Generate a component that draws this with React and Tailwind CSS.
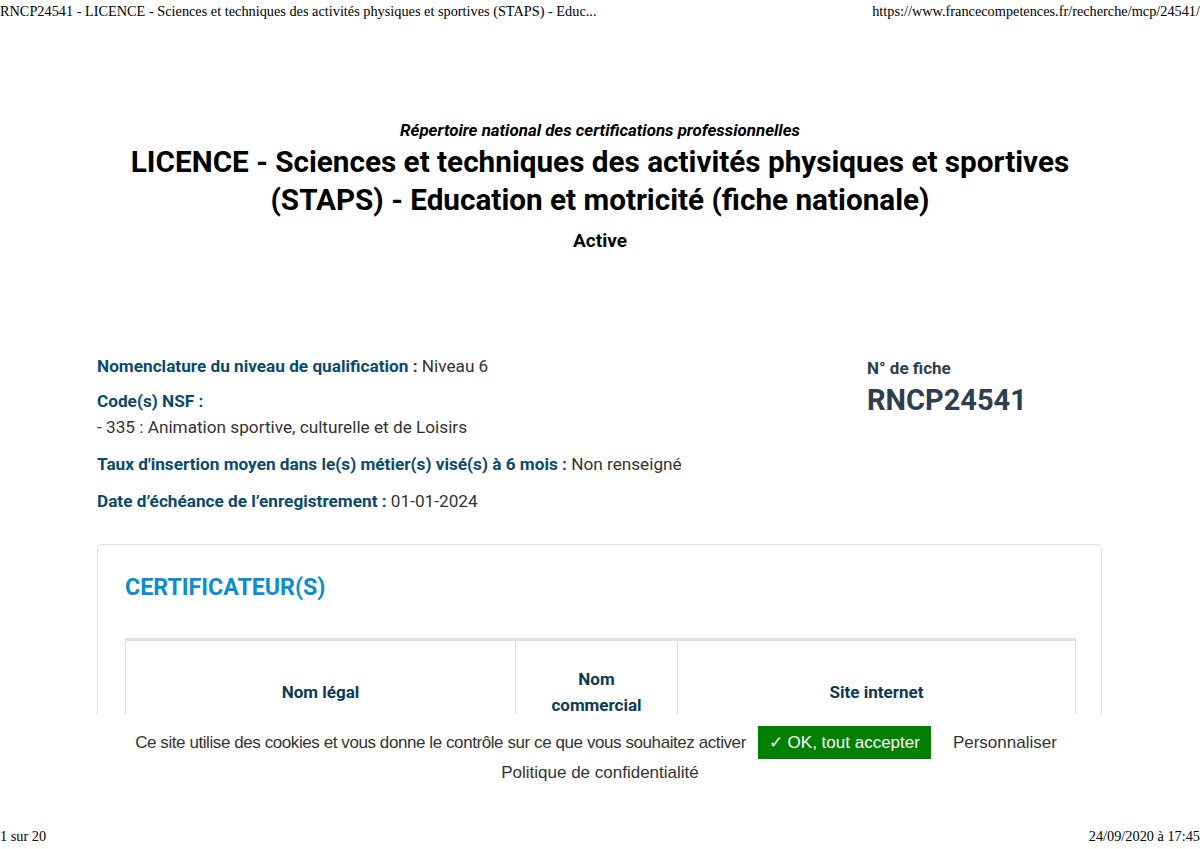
import React from "react";

const App = () => {
  return (
    <div className="h-[849px] w-[1200px] flex flex-col bg-white overflow-hidden">
      {/* Print header */}
      <div className="h-[24px] flex items-start justify-between font-['Liberation_Serif',serif] text-[14.3px] leading-[22px] text-black">
        <span>RNCP24541 - LICENCE - Sciences et techniques des activités physiques et sportives (STAPS) - Educ...</span>
        <span>https://www.francecompetences.fr/recherche/mcp/24541/</span>
      </div>

      {/* Page */}
      <div className="relative flex-1 overflow-hidden font-['Roboto',sans-serif]">
        <div className="pt-[95px] text-center text-black">
          <p className="text-[16.9px] leading-[22px] italic font-bold">
            Répertoire national des certifications professionnelles
          </p>
          <h1 className="mt-[2px] text-[29.7px] leading-[38px] font-bold">
            LICENCE - Sciences et techniques des activités physiques et sportives
            <br />
            (STAPS) - Education et motricité (fiche nationale)
          </h1>
          <p className="mt-[10px] text-[19px] leading-[24px] font-bold">Active</p>
        </div>

        {/* Infos */}
        <div className="mt-[102px] ml-[97px] mr-[99px] flex justify-between">
          <div className="flex flex-col text-[17.2px] leading-[22px] text-[#333]">
            <p>
              <span className="font-bold text-[#0b4a6f]">Nomenclature du niveau de qualification : </span>
              Niveau 6
            </p>
            <p className="mt-[13px] font-bold text-[#0b4a6f]">Code(s) NSF :</p>
            <p className="mt-[4px]">- 335 : Animation sportive, culturelle et de Loisirs</p>
            <p className="mt-[15px]">
              <span className="font-bold text-[#0b4a6f]">Taux d'insertion moyen dans le(s) métier(s) visé(s) à 6 mois : </span>
              Non renseigné
            </p>
            <p className="mt-[15px]">
              <span className="font-bold text-[#0b4a6f]">Date d’échéance de l’enregistrement : </span>
              01-01-2024
            </p>
          </div>
          <div className="w-[234px] pt-[2px] text-[#2c3e50]">
            <p className="text-[17px] leading-[22px] font-bold">N° de fiche</p>
            <p className="text-[29px] leading-[34px] font-bold mt-[4px]">RNCP24541</p>
          </div>
        </div>

        {/* Certificateurs card */}
        <div className="mt-[32px] ml-[97px] w-[1005px] rounded-[5px] border border-[#e3e3e3] px-[27px] pt-[27px] pb-[40px]">
          <h2 className="text-[23.2px] leading-[30px] font-bold text-[#0a8dd1]">CERTIFICATEUR(S)</h2>
          <table className="mt-[36px] w-[951px] border-collapse text-[17px] leading-[26px] font-bold text-[#0b3a56]">
            <thead>
              <tr className="border-t-[3px] border-[#e0e0e0]">
                <th className="w-[390px] h-[104px] border border-[#e0e0e0] font-bold">Nom légal</th>
                <th className="w-[162px] border border-[#e0e0e0] font-bold px-[26px]">Nom commercial</th>
                <th className="border border-[#e0e0e0] font-bold">Site internet</th>
              </tr>
            </thead>
          </table>
        </div>

        {/* Cookie banner */}
        <div className="absolute inset-x-0 bottom-0 h-[111px] bg-white font-['Liberation_Sans',sans-serif] text-[17px] text-[#333]">
          <div className="mt-[12px] flex items-center justify-center pr-[8px]">
            <span className="tracking-[-0.42px]">Ce site utilise des cookies et vous donne le contrôle sur ce que vous souhaitez activer</span>
            <span className="ml-[12px] bg-[#008000] text-white px-[11px] h-[33px] flex items-center">✓ OK, tout accepter</span>
            <span className="ml-[22px]">Personnaliser</span>
          </div>
          <p className="mt-[1px] text-center">Politique de confidentialité</p>
        </div>
      </div>

      {/* Print footer */}
      <div className="h-[24px] flex items-center justify-between font-['Liberation_Serif',serif] text-[14.3px] text-black">
        <span>1 sur 20</span>
        <span>24/09/2020 à 17:45</span>
      </div>
    </div>
  );
};

export default App;
